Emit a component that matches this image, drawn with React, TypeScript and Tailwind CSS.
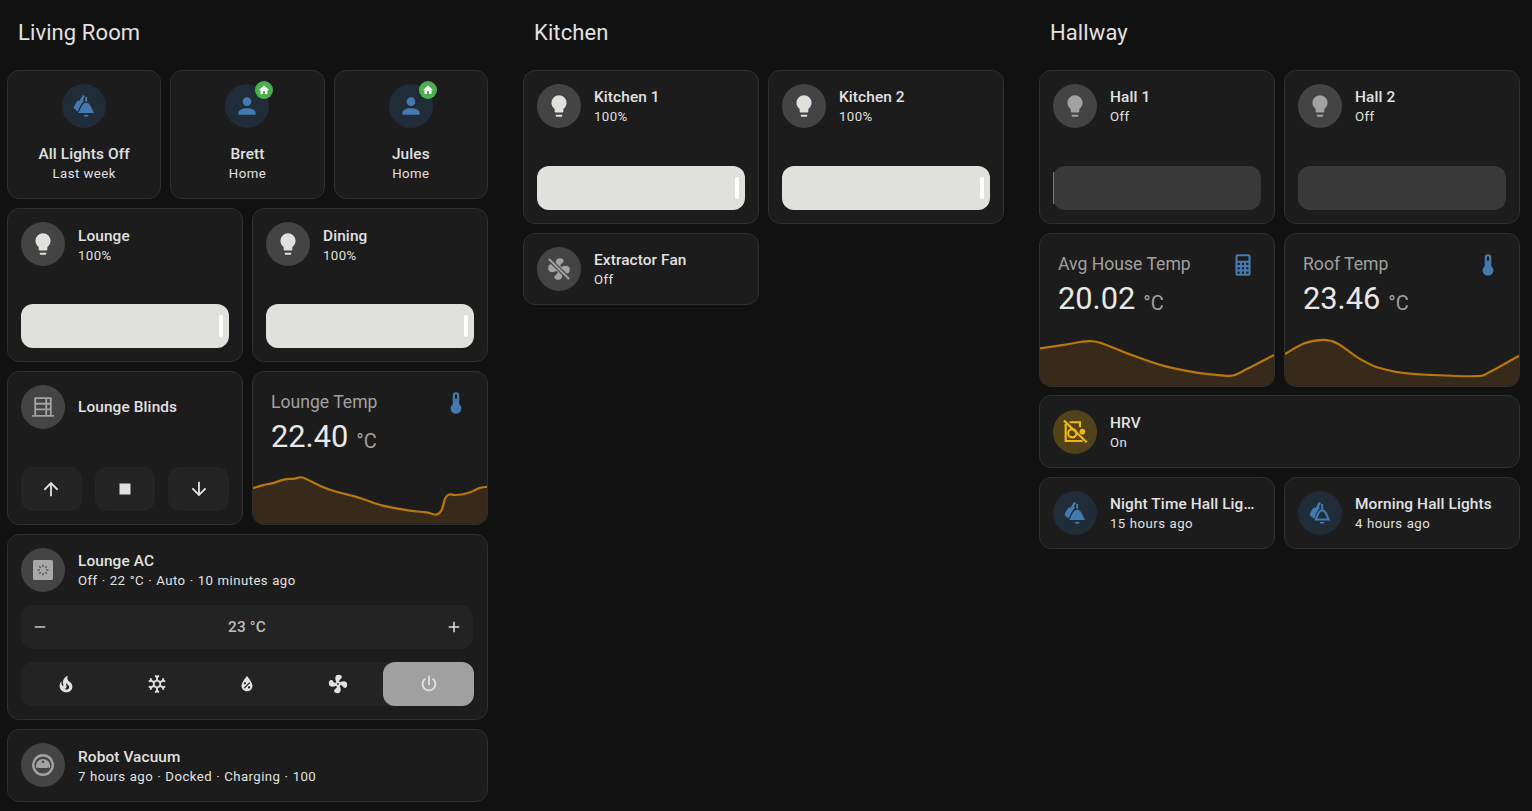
const mdi = {
  bulb: "M12,2A7,7 0 0,0 5,9C5,11.38 6.19,13.47 8,14.74V17A1,1 0 0,0 9,18H15A1,1 0 0,0 16,17V14.74C17.81,13.47 19,11.38 19,9A7,7 0 0,0 12,2M9,21A1,1 0 0,0 10,22H14A1,1 0 0,0 15,21V20H9V21Z",
  account: "M12,4A4,4 0 0,1 16,8A4,4 0 0,1 12,12A4,4 0 0,1 8,8A4,4 0 0,1 12,4M12,14C16.42,14 20,15.79 20,18V20H4V18C4,15.79 7.58,14 12,14Z",
  home: "M10,20V14H14V20H19V12H22L12,3L2,12H5V20H10Z",
  thermometer: "M15 13V5A3 3 0 0 0 9 5V13A5 5 0 1 0 15 13M12 4A1 1 0 0 1 13 5V8H11V5A1 1 0 0 1 12 4Z",
  calculator: "M7,2H17A2,2 0 0,1 19,4V20A2,2 0 0,1 17,22H7A2,2 0 0,1 5,20V4A2,2 0 0,1 7,2M7,4V8H17V4H7M7,10V12H9V10H7M11,10V12H13V10H11M15,10V12H17V10H15M7,14V16H9V14H7M11,14V16H13V14H11M15,14V16H17V14H15M7,18V20H9V18H7M11,18V20H13V18H11M15,18V20H17V18H15Z",
  up: "M13,20H11V8L5.5,13.5L4.08,12.08L12,4.16L19.92,12.08L18.5,13.5L13,8V20Z",
  down: "M11,4H13V16L18.5,10.5L19.92,11.92L12,19.84L4.08,11.92L5.5,10.5L11,16V4Z",
  stop: "M18,18H6V6H18V18Z",
  minus: "M19,13H5V11H19V13Z",
  plus: "M19,13H13V19H11V13H5V11H11V5H13V11H19V13Z",
  power: "M16.56,5.44L15.11,6.89C16.84,7.94 18,9.83 18,12A6,6 0 0,1 12,18A6,6 0 0,1 6,12C6,9.83 7.16,7.94 8.88,6.88L7.44,5.44C5.36,6.88 4,9.28 4,12A8,8 0 0,0 12,20A8,8 0 0,0 20,12C20,9.28 18.64,6.88 16.56,5.44M13,3H11V13H13",
  fan: "M12,11A1,1 0 0,0 11,12A1,1 0 0,0 12,13A1,1 0 0,0 13,12A1,1 0 0,0 12,11M12.5,2C17,2 17.11,5.57 14.75,6.75C13.76,7.24 13.32,8.29 13.13,9.22C13.61,9.42 14.03,9.73 14.35,10.13C18.05,8.13 22.03,8.92 22.03,12.5C22.03,17 18.46,17.1 17.28,14.73C16.78,13.74 15.72,13.3 14.79,13.11C14.59,13.59 14.28,14 13.88,14.34C15.87,18.03 15.08,22 11.5,22C7,22 6.91,18.42 9.27,17.24C10.25,16.75 10.69,15.71 10.89,14.79C10.4,14.59 9.97,14.27 9.65,13.87C5.96,15.85 2,15.07 2,11.5C2,7 5.56,6.89 6.74,9.26C7.24,10.25 8.29,10.68 9.22,10.87C9.41,10.39 9.73,9.97 10.14,9.65C8.15,5.96 8.94,2 12.5,2Z",
  snow: "M20.79,13.95L18.46,14.57L16.46,13.44V10.56L18.46,9.43L20.79,10.05L21.31,8.12L19.54,7.65L20,5.88L18.07,5.36L17.45,7.69L15.45,8.82L13,7.38V5.12L14.71,3.41L13.29,2L12,3.29L10.71,2L9.29,3.41L11,5.12V7.38L8.5,8.82L6.5,7.69L5.92,5.36L4,5.88L4.47,7.65L2.7,8.12L3.22,10.05L5.55,9.43L7.55,10.56V13.45L5.55,14.58L3.22,13.96L2.7,15.89L4.47,16.36L4,18.12L5.93,18.64L6.55,16.31L8.55,15.18L11,16.62V18.88L9.29,20.59L10.71,22L12,20.71L13.29,22L14.7,20.59L13,18.88V16.62L15.5,15.17L17.5,16.3L18.12,18.63L20,18.12L19.53,16.35L21.3,15.88L20.79,13.95M9.5,10.56L12,9.11L14.5,10.56V13.44L12,14.89L9.5,13.44V10.56Z",
  fire: "M17.66 11.2C17.43 10.9 17.15 10.64 16.89 10.38C16.22 9.78 15.46 9.35 14.82 8.72C13.33 7.26 13 4.85 13.95 3C13 3.23 12.17 3.75 11.46 4.32C8.87 6.4 7.85 10.07 9.07 13.22C9.11 13.32 9.15 13.42 9.15 13.55C9.15 13.77 9 13.97 8.8 14.05C8.57 14.15 8.33 14.09 8.14 13.93C8.08 13.88 8.04 13.83 8 13.76C6.87 12.33 6.69 10.28 7.45 8.64C5.78 10 4.87 12.3 5 14.47C5.06 14.97 5.12 15.47 5.29 15.97C5.43 16.57 5.7 17.17 6 17.7C7.08 19.43 8.95 20.67 10.96 20.92C13.1 21.19 15.39 20.8 17.03 19.32C18.86 17.66 19.5 15 18.56 12.72L18.43 12.46C18.22 12 17.66 11.2 17.66 11.2M14.5 17.5C14.22 17.74 13.76 18 13.4 18.1C12.28 18.5 11.16 17.94 10.5 17.28C11.69 17 12.4 16.12 12.61 15.23C12.78 14.43 12.46 13.77 12.33 13C12.21 12.26 12.23 11.63 12.5 10.94C12.69 11.32 12.89 11.7 13.13 12C13.9 13 15.11 13.44 15.37 14.8C15.41 14.94 15.43 15.08 15.43 15.23C15.46 16.05 15.1 16.95 14.5 17.5H14.5Z",
  water: "M12,3.25C12,3.25 6,10 6,14C6,17.32 8.69,20 12,20A6,6 0 0,0 18,14C18,10 12,3.25 12,3.25M14.47,9.97L15.53,11.03L9.53,17.03L8.47,15.97M9.75,10A1.25,1.25 0 0,1 11,11.25A1.25,1.25 0 0,1 9.75,12.5A1.25,1.25 0 0,1 8.5,11.25A1.25,1.25 0 0,1 9.75,10M14.25,14.5A1.25,1.25 0 0,1 15.5,15.75A1.25,1.25 0 0,1 14.25,17A1.25,1.25 0 0,1 13,15.75A1.25,1.25 0 0,1 14.25,14.5Z",
};

function Icon({ d, className = "w-[26px] h-[26px]" }: { d: string; className?: string }) {
  return (
    <svg viewBox="0 0 24 24" className={className} fill="currentColor">
      <path d={d} />
    </svg>
  );
}

// ceiling lights, the second lamp sits tilted behind the first
function SceneIcon({ outline = false }: { outline?: boolean }) {
  return (
    <svg viewBox="0 0 24 24" className="w-[26px] h-[26px]" fill="currentColor">
      <path d="M11 1.800l1.900 1-2 3.600 1 .6-.8 1.300c-1.700 1.500-3 4.500-4.300 9.200L2.300 13.800c1-2.800 2.300-5 4.200-7.200l1.200.7z" />
      <path d="M13.100 3.800h1.800v5h-1.800z" />
      {outline ? (
        <path
          d="M14 9.400c2.800 0 3.900 3.400 6 8.600H8c2.100-5.200 3.200-8.600 6-8.600z"
          fill="#212c39"
          stroke="currentColor"
          strokeWidth="1.800"
        />
      ) : (
        <path d="M14 8.400c3.600 0 5 4 8 10.600H6c3-6.600 4.400-10.600 8-10.600z" stroke="#212c39" strokeWidth="1" />
      )}
      <path d="M12 20.200h4v1.500h-4z" />
    </svg>
  );
}

function BlindsIcon() {
  return (
    <svg viewBox="0 0 24 24" className="w-[26px] h-[26px]" fill="none" stroke="currentColor" strokeWidth="1.700">
      <path d="M4.800 20V3.800H19.200V20" />
      <path d="M2 20.200H22" />
      <path d="M4.800 9H19.200M4.800 14.200H19.200M15 3.800V20" />
    </svg>
  );
}

function AcIcon() {
  const dots = [0, 45, 90, 135, 180, 225, 270, 315];
  return (
    <svg viewBox="0 0 24 24" className="w-6 h-6">
      <rect x="2" y="2" width="20" height="20" rx="1.500" fill="#a8a8a8" />
      {dots.map((a) => (
        <rect key={a} x="11.300" y="6.600" width="1.400" height="2.400" fill="#555555" transform={`rotate(${a} 12 12)`} />
      ))}
    </svg>
  );
}

function VacuumIcon() {
  return (
    <svg viewBox="0 0 24 24" className="w-[26px] h-[26px]" fill="currentColor">
      <circle cx="12" cy="12" r="9" fill="none" stroke="currentColor" strokeWidth="2.200" />
      <path d="M5.500 13a6.500 6.500 0 0 1 13 0v1.800c-1-.8-2-.8-3 0h-7c-1-.8-2-.8-3 0z" />
      <circle cx="12" cy="9" r="1.200" fill="#4a4a4a" />
    </svg>
  );
}

function HrvIcon() {
  return (
    <svg viewBox="0 0 24 24" className="w-[26px] h-[26px]" fill="none" stroke="currentColor" strokeWidth="2">
      <path d="M7 3h9.600v4.500" />
      <path d="M3.400 4.500V20.300H19" />
      <circle cx="9.500" cy="13.200" r="3.800" />
      <path d="M1.800 1.500L22.800 21.500" />
      <circle cx="18.800" cy="11.700" r="1.600" fill="currentColor" />
    </svg>
  );
}

function FanOffIcon() {
  return (
    <svg viewBox="0 0 24 24" className="w-[26px] h-[26px]" fill="currentColor">
      <path d={mdi.fan} />
      <path d="M3 3L21 21" stroke="#4a4a4a" strokeWidth="4" />
      <path d="M2.600 2.600L21.400 21.400" stroke="currentColor" strokeWidth="1.800" />
    </svg>
  );
}

function Card({ className = "", children }: { className?: string; children: React.ReactNode }) {
  return (
    <div className={`bg-[#1c1c1c] border border-[#2f2f2f] rounded-[12px] overflow-hidden ${className}`}>
      {children}
    </div>
  );
}

function Circle({ tone = "gray", children }: { tone?: "gray" | "blue" | "yellow"; children: React.ReactNode }) {
  const tones = {
    gray: "bg-[#444444] text-[#a3a3a3]",
    blue: "bg-[#212c39] text-[#447ab0]",
    yellow: "bg-[#514219] text-[#f0b912]",
  };
  return (
    <div className={`w-11 h-11 shrink-0 rounded-full flex items-center justify-center ${tones[tone]}`}>
      {children}
    </div>
  );
}

function TileHead({ icon, name, sub, tone, low }: { icon: React.ReactNode; name: string; sub?: string; tone?: "gray" | "blue" | "yellow"; low?: boolean }) {
  const pad = !sub ? "" : low ? "pt-[4px]" : "pt-[2px]";
  return (
    <div className="flex items-center gap-[13px] h-11">
      <Circle tone={tone}>{icon}</Circle>
      <div className={`min-w-0 flex-1 pr-[5px] ${pad}`}>
        <div className="text-[15.4px] leading-[20px] font-medium tracking-[0.11px] text-[#e1e1e1] truncate">{name}</div>
        {sub && <div className="text-[13.2px] leading-[20px] tracking-[0.44px] [word-spacing:0.45px] text-[#e1e1e1] truncate">{sub}</div>}
      </div>
    </div>
  );
}

function PersonCard({ icon, name, sub, badge }: { icon: React.ReactNode; name: string; sub: string; badge?: boolean }) {
  return (
    <Card className="h-[129px] pt-[13px] flex flex-col items-center">
      <div className="relative">
        <Circle tone="blue">{icon}</Circle>
        {badge && (
          <div className="absolute -top-[3px] -right-[4px] w-[18px] h-[18px] rounded-full bg-[#4caf50] flex items-center justify-center text-white">
            <Icon d={mdi.home} className="w-3 h-3" />
          </div>
        )}
      </div>
      <div className="mt-[16px] text-[15.4px] leading-[20px] font-medium tracking-[0.11px] text-[#e1e1e1]">{name}</div>
      <div className="text-[13.2px] leading-[20px] tracking-[0.44px] text-[#e1e1e1]">{sub}</div>
    </Card>
  );
}

function LightCard({ name, sub, on = true, handle = true, low }: { name: string; sub: string; on?: boolean; handle?: boolean; low?: boolean }) {
  return (
    <Card className="h-[154px] p-[13px] flex flex-col justify-between">
      <TileHead icon={<Icon d={mdi.bulb} className={on ? "w-[26px] h-[26px] text-[#e0e0dc]" : "w-[26px] h-[26px]"} />} name={name} sub={sub} low={low} />
      {on ? (
        <div className="h-11 rounded-[12px] bg-[#e0e0dc] flex items-center justify-end pr-[6px]">
          <div className="w-1 h-[22px] rounded-sm bg-white" />
        </div>
      ) : (
        <div className="h-11 rounded-[12px] bg-[#393939] flex items-center">
          {handle && <div className="w-px h-[32px] bg-[#7a7a7a]" />}
        </div>
      )}
    </Card>
  );
}

function smooth(points: number[][]) {
  // catmull-rom to bezier
  let d = `M${points[0][0]},${points[0][1]}`;
  for (let i = 0; i < points.length - 1; i++) {
    const p0 = points[Math.max(i - 1, 0)];
    const p1 = points[i];
    const p2 = points[i + 1];
    const p3 = points[Math.min(i + 2, points.length - 1)];
    d += ` C${p1[0] + (p2[0] - p0[0]) / 6},${p1[1] + (p2[1] - p0[1]) / 6} ${p2[0] - (p3[0] - p1[0]) / 6},${p2[1] - (p3[1] - p1[1]) / 6} ${p2[0]},${p2[1]}`;
  }
  return d;
}

function TempCard({ name, value, icon, points }: { name: string; value: string; icon: string; points: number[][] }) {
  const line = smooth(points);
  const last = points[points.length - 1];
  return (
    <Card className="h-[154px] flex flex-col">
      <div className="flex justify-between pl-[18px] pr-[18px] pt-[19px]">
        <div className="text-[17.6px] leading-[22px] text-[#a0a0a0]">{name}</div>
        <div className="-mt-[1px]">
          <Icon d={icon} className="w-[26px] h-[26px] text-[#447ab0]" />
        </div>
      </div>
      <div className="pl-[18px] mt-[2px] flex items-baseline">
        <span className="text-[30.8px] leading-[38px] text-[#e8e8e8]">{value}</span>
        <span className="ml-2 text-[20px] text-[#a0a0a0] translate-y-px">°C</span>
      </div>
      <svg viewBox="0 0 236 50" className="mt-auto w-full h-[50px] block">
        <path d={`${line} L${last[0]},50 L${points[0][0]},50 Z`} fill="#372a1a" />
        <path d={line} fill="none" stroke="#b9770f" strokeWidth="2.200" />
      </svg>
    </Card>
  );
}

function CoverButton({ d }: { d: string }) {
  return (
    <div className="flex-1 h-11 rounded-[12px] bg-[#242424] flex items-center justify-center text-[#e1e1e1]">
      <Icon d={d} className="w-[22px] h-[22px]" />
    </div>
  );
}

const loungePoints = [[0, 14], [11, 10.7], [20, 9], [31, 5.5], [42, 4.5], [50, 3.3], [65, 10.5], [81, 16.7], [108, 24], [131, 31.7], [158, 36.7], [175, 38.5], [185, 40.7], [190, 36.7], [194, 24], [198, 20.5], [204, 21], [215, 19.5], [222, 17], [228, 14], [236, 12.7]];
const avgPoints = [[0, 12.3], [24, 8.7], [42, 5.6], [51, 5], [62, 7], [88, 17.3], [124, 29.7], [158, 36.7], [186, 39.8], [194, 39.6], [202, 36.5], [236, 19]];
const roofPoints = [[0, 18], [19, 7.3], [39, 3.7], [53, 7.3], [73, 21.3], [93, 31.3], [119, 37], [146, 39], [193, 40.3], [206, 36.3], [236, 19.7]];

function Title({ children }: { children: React.ReactNode }) {
  return <h2 className="h-[70px] pl-[11px] pt-[19px] text-[22px] leading-[28px] tracking-[0.1px] text-[#e1e1e1]">{children}</h2>;
}

export default function App() {
  return (
    <div className="min-h-[811px] bg-[#111111] pl-[7px] font-['Roboto',sans-serif] grid grid-cols-[repeat(3,481px)] gap-x-[35px] items-start">
      {/* Living Room */}
      <div>
        <Title>Living Room</Title>
        <div className="flex flex-col gap-[9px]">
          <div className="grid grid-cols-3 gap-[9px]">
            <PersonCard icon={<SceneIcon />} name="All Lights Off" sub="Last week" />
            <PersonCard icon={<Icon d={mdi.account} />} name="Brett" sub="Home" badge />
            <PersonCard icon={<Icon d={mdi.account} />} name="Jules" sub="Home" badge />
          </div>
          <div className="grid grid-cols-2 gap-[9px]">
            <LightCard name="Lounge" sub="100%" low />
            <LightCard name="Dining" sub="100%" low />
          </div>
          <div className="grid grid-cols-2 gap-[9px]">
            <Card className="h-[154px] p-[13px] flex flex-col justify-between">
              <TileHead icon={<BlindsIcon />} name="Lounge Blinds" />
              <div className="flex gap-[13px]">
                <CoverButton d={mdi.up} />
                <CoverButton d={mdi.stop} />
                <CoverButton d={mdi.down} />
              </div>
            </Card>
            <TempCard name="Lounge Temp" value="22.40" icon={mdi.thermometer} points={loungePoints} />
          </div>
          <Card className="h-[186px] p-[13px]">
            <TileHead icon={<AcIcon />} name="Lounge AC" sub="Off · 22 °C · Auto · 10 minutes ago" />
            <div className="mt-[13px] mr-px h-11 rounded-[12px] bg-[#232323] flex items-center justify-between px-[10px] text-[#e1e1e1]">
              <Icon d={mdi.minus} className="w-[18px] h-[18px] text-[#c8c8c8]" />
              <span className="pt-[2px] text-[15.4px] font-medium tracking-[0.11px] text-[#bdbdbd]">23 °C</span>
              <Icon d={mdi.plus} className="w-[18px] h-[18px]" />
            </div>
            <div className="mt-[13px] h-11 rounded-[12px] bg-[#232323] grid grid-cols-5 text-[#e1e1e1]">
              {[mdi.fire, mdi.snow, mdi.water, mdi.fan].map((d) => (
                <div key={d} className="flex items-center justify-center">
                  <Icon d={d} className="w-[22px] h-[22px]" />
                </div>
              ))}
              <div className="rounded-[12px] bg-[#a0a0a0] flex items-center justify-center">
                <Icon d={mdi.power} className="w-[22px] h-[22px]" />
              </div>
            </div>
          </Card>
          <Card className="h-[73px] px-[13px] pt-[13px]">
            <TileHead icon={<VacuumIcon />} name="Robot Vacuum" sub="7 hours ago · Docked · Charging · 100" low />
          </Card>
        </div>
      </div>

      {/* Kitchen */}
      <div>
        <Title>Kitchen</Title>
        <div className="flex flex-col gap-[9px]">
          <div className="grid grid-cols-2 gap-[9px]">
            <LightCard name="Kitchen 1" sub="100%" />
            <LightCard name="Kitchen 2" sub="100%" />
          </div>
          <div className="grid grid-cols-2 gap-[9px]">
            <Card className="h-[72px] px-[13px] pt-[13px]">
              <TileHead icon={<FanOffIcon />} name="Extractor Fan" sub="Off" />
            </Card>
          </div>
        </div>
      </div>

      {/* Hallway */}
      <div>
        <Title>Hallway</Title>
        <div className="flex flex-col gap-[9px]">
          <div className="grid grid-cols-2 gap-[9px]">
            <LightCard name="Hall 1" sub="Off" on={false} />
            <LightCard name="Hall 2" sub="Off" on={false} handle={false} />
          </div>
          <div className="grid grid-cols-2 gap-[9px]">
            <TempCard name="Avg House Temp" value="20.02" icon={mdi.calculator} points={avgPoints} />
            <TempCard name="Roof Temp" value="23.46" icon={mdi.thermometer} points={roofPoints} />
          </div>
          <Card className="h-[73px] -mt-px px-[13px] pt-[14px]">
            <TileHead icon={<HrvIcon />} name="HRV" sub="On" tone="yellow" />
          </Card>
          <div className="grid grid-cols-2 gap-[9px]">
            <Card className="h-[72px] px-[13px] pt-[13px]">
              <TileHead icon={<SceneIcon />} name="Night Time Hall Lights" sub="15 hours ago" tone="blue" />
            </Card>
            <Card className="h-[72px] px-[13px] pt-[13px]">
              <TileHead icon={<SceneIcon outline />} name="Morning Hall Lights" sub="4 hours ago" tone="blue" />
            </Card>
          </div>
        </div>
      </div>
    </div>
  );
}
